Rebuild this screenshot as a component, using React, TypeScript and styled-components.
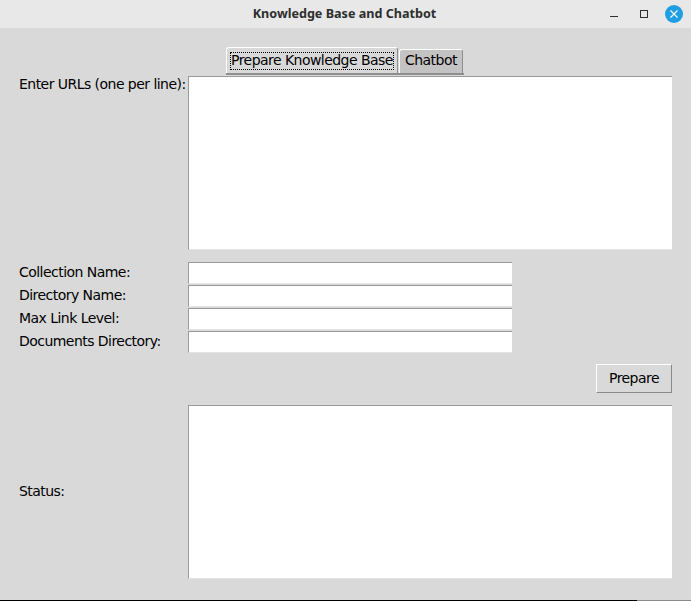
import React from "react";
import styled, { createGlobalStyle } from "styled-components";

const Global = createGlobalStyle`
  html, body { margin: 0; padding: 0; background: #d9d9d9; }
  #root { width: 691px; height: 601px; overflow: hidden; }
  * { box-sizing: border-box; }
`;

const Win = styled.div`
  width: 691px; height: 601px; display: flex; flex-direction: column;
  background: #d9d9d9; color: #000; font: 14px/16px "DejaVu Sans", sans-serif; letter-spacing: -0.54px;
`;
const TitleBar = styled.header`
  height: 28px; flex: none; background: #e8e8e8; position: relative;
  display: flex; align-items: center; justify-content: center;
`;
const Title = styled.h1`
  margin: 0 2px 0 0; font: bold 12.6px/16px "Noto Sans", sans-serif; letter-spacing: 0; color: #2e2e2e;
`;
const Controls = styled.div`
  position: absolute; left: 605px; top: 5px; display: flex; align-items: center;
`;
const Ctl = styled.svg<{ $w: number }>`
  display: block; width: ${p => p.$w}px; height: 18px;
`;
const Content = styled.main`
  flex: 1; display: flex; flex-direction: column; padding: 19px 19px 0;
`;
const Tabs = styled.nav`
  align-self: flex-start; margin-left: 207px; width: 238px; height: 28px; display: flex; align-items: flex-end;
  gap: 1px; border-bottom: 2px solid #8e8e8e; margin-bottom: 1px;
`;
const Tab = styled.div<{ $active?: boolean }>`
  height: ${p => p.$active ? 26 : 24}px; width: ${p => p.$active ? 172 : 64}px;
  padding: ${p => p.$active ? "4px 3px 0 3px" : "2px 4px 0"};
  background: ${p => p.$active ? "#d9d9d9" : "#c3c3c3"};
  border: 1px solid #8e8e8e; border-top-color: #fff; border-left-color: #fff;
  border-bottom: none; border-radius: 3px 3px 0 0;
`;
const TabLabel = styled.span<{ $focus?: boolean }>`
  display: block; padding: 0 0 2px 1px; outline: ${p => p.$focus ? "1px dotted #000" : "none"};
  outline-offset: -1px; white-space: nowrap;
`;
const UrlRow = styled.section`
  display: grid; grid-template-columns: 169px 484px; height: 174px;
`;
const Label = styled.label`
  white-space: nowrap; padding-bottom: 2px;
`;
const Box = styled.div`
  background: #fff; border-top: 1px solid #9a9a9a; border-left: 1px solid #9a9a9a;
  border-bottom: 1px solid #e4e4e4;
`;
const StatusBox = styled(Box)`
  height: 174px;
`;
const Fields = styled.section`
  display: flex; flex-direction: column; gap: 1px; margin-top: 12px;
`;
const FieldRow = styled.div`
  display: grid; grid-template-columns: 169px 324px; height: 22px; align-items: center;
`;
const Entry = styled.div`
  height: 22px; background: #fff; border-top: 1px solid #9a9a9a; border-left: 1px solid #9a9a9a;
  border-bottom: 1px solid #e4e4e4;
`;
const Actions = styled.div`
  display: flex; justify-content: flex-end; margin-top: 11px;
`;
const Button = styled.button`
  width: 76px; height: 29px; padding: 0 0 2px; background: #d9d9d9; color: #000;
  font: 14px/16px "DejaVu Sans", sans-serif; letter-spacing: -0.54px;
  border: 1px solid #8a8a8a; border-top-color: #fff; border-left-color: #fff; border-radius: 0;
`;
const StatusRow = styled.section`
  display: grid; grid-template-columns: 169px 484px; height: 174px; margin-top: 12px; align-items: center;
`;
const Bottom = styled.div`
  height: 1px; flex: none; margin-top: auto; background: linear-gradient(to right, #000 0 637px, #8a8a8a 637px);
`;

const labels = ["Collection Name:", "Directory Name:", "Max Link Level:", "Documents Directory:"];

export default function App() {
  return (
    <Win>
      <Global />
      <TitleBar>
        <Title>Knowledge Base and Chatbot</Title>
        <Controls>
          <Ctl $w={30} viewBox="0 0 30 18"><path d="M5 11.5h8" stroke="#2e2e2e" strokeWidth="1" fill="none" /></Ctl>
          <Ctl $w={30} viewBox="0 0 30 18"><rect x="5.5" y="5.5" width="7" height="7" stroke="#2e2e2e" strokeWidth="1" fill="none" /></Ctl>
          <Ctl $w={18} viewBox="0 0 18 18">
            <circle cx="9" cy="9" r="9" fill="#1f9ee3" />
            <path d="M5.5 5.5l7 7M12.5 5.5l-7 7" stroke="#fff" strokeWidth="1.1" fill="none" />
          </Ctl>
        </Controls>
      </TitleBar>
      <Content>
        <Tabs>
          <Tab $active><TabLabel $focus>Prepare Knowledge Base</TabLabel></Tab>
          <Tab><TabLabel>Chatbot</TabLabel></Tab>
        </Tabs>
        <UrlRow>
          <Label>Enter URLs (one per line):</Label>
          <Box />
        </UrlRow>
        <Fields>
          {labels.map(l => (
            <FieldRow key={l}><Label>{l}</Label><Entry /></FieldRow>
          ))}
        </Fields>
        <Actions><Button>Prepare</Button></Actions>
        <StatusRow>
          <Label>Status:</Label>
          <StatusBox />
        </StatusRow>
      </Content>
      <Bottom />
    </Win>
  );
}
